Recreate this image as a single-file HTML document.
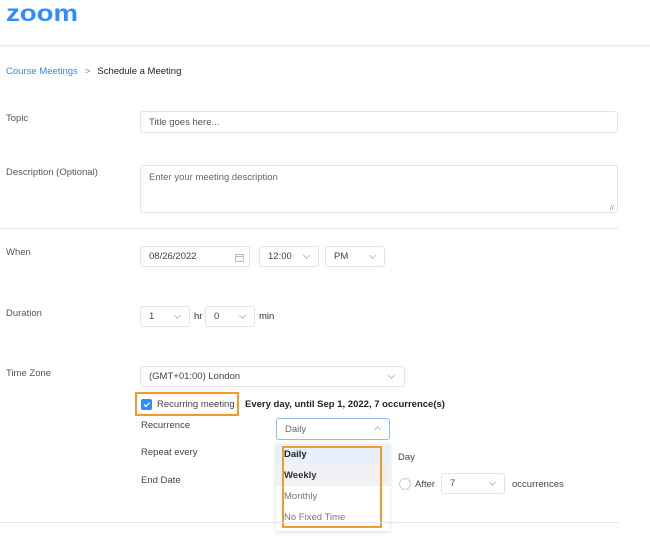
<!DOCTYPE html>
<html><head><style>
*{box-sizing:border-box;margin:0;padding:0}
body{width:650px;height:537px;background:#fff;font-family:"Liberation Sans",Arial,sans-serif;font-size:9.5px;color:#333;position:relative;overflow:hidden}
.a{position:absolute}
.lbl{position:absolute;left:6px;color:#555;font-size:9.5px}
.box{position:absolute;border:1px solid #e3e3e8;border-radius:3px;background:#fff;color:#444;padding-left:8px;display:flex;align-items:center;font-size:9.5px}
.chev{position:absolute;width:5px;height:5px;border-right:1px solid #bbb;border-bottom:1px solid #bbb;transform:rotate(45deg)}
.line{position:absolute;left:0;width:618px;height:1px;background:#e6e6ea}
.dd{position:absolute;left:276px;width:114px;padding-left:8px;display:flex;align-items:center;font-size:9.5px}
</style></head><body>
<div class="a" style="left:0;top:0;width:650px;height:46px;border-bottom:1px solid #e6e6e6;box-shadow:0 1px 2px rgba(0,0,0,.05)"></div>
<svg class="a" style="left:5px;top:0" width="80" height="26"><text x="1" y="21" font-family="Liberation Sans" font-weight="bold" font-size="23" fill="#2d8cff" textLength="72" lengthAdjust="spacingAndGlyphs">zoom</text></svg>
<div class="a" style="left:6px;top:66px;font-size:9.5px"><span style="color:#2d8cff">Course Meetings</span><span style="color:#888;margin:0 7px 0 7px">&gt;</span><span style="color:#222">Schedule a Meeting</span></div>

<div class="lbl" style="top:113px">Topic</div>
<div class="box" style="left:140px;top:111px;width:478px;height:22px;color:#555">Title goes here...</div>

<div class="lbl" style="top:167px">Description (Optional)</div>
<div class="box" style="left:140px;top:165px;width:478px;height:48px;align-items:flex-start;padding-top:6px;color:#666">Enter your meeting description</div>
<div class="a" style="left:610px;top:205px;font-size:7px;color:#888">//</div>
<div class="line" style="top:228px"></div>

<div class="lbl" style="top:247px">When</div>
<div class="box" style="left:140px;top:246px;width:110px;height:21px">08/26/2022<svg class="a" style="left:94px;top:6px" width="9" height="9"><rect x="0.5" y="1.5" width="8" height="7" fill="none" stroke="#bbb"/><line x1="0.5" y1="3.5" x2="8.5" y2="3.5" stroke="#bbb"/></svg></div>
<div class="box" style="left:259px;top:246px;width:60px;height:21px">12:00<span class="chev" style="left:44px;top:6px"></span></div>
<div class="box" style="left:325px;top:246px;width:60px;height:21px">PM<span class="chev" style="left:44px;top:6px"></span></div>

<div class="lbl" style="top:308px">Duration</div>
<div class="box" style="left:140px;top:306px;width:50px;height:21px">1<span class="chev" style="left:34px;top:6px"></span></div>
<div class="a" style="left:194px;top:311px">hr</div>
<div class="box" style="left:205px;top:306px;width:50px;height:21px">0<span class="chev" style="left:34px;top:6px"></span></div>
<div class="a" style="left:259px;top:311px">min</div>

<div class="lbl" style="top:368px">Time Zone</div>
<div class="box" style="left:140px;top:366px;width:265px;height:21px">(GMT+01:00) London<span class="chev" style="left:248px;top:6px"></span></div>

<div class="a" style="left:135px;top:392px;width:104px;height:24px;border:2px solid #f39a2b"></div>
<div class="a" style="left:141px;top:399px;width:11px;height:11px;background:#2d8cff;border-radius:2px"><svg width="11" height="11"><path d="M3 5.5l2 2 3.5-4" stroke="#fff" stroke-width="1.3" fill="none"/></svg></div>
<div class="a" style="left:157px;top:399px;color:#444">Recurring meeting</div>
<div class="a" style="left:245px;top:399px;font-weight:bold;color:#222">Every day, until Sep 1, 2022, 7 occurrence(s)</div>

<div class="lbl" style="top:420px;left:141px;color:#444">Recurrence</div>
<div class="box" style="left:276px;top:418px;width:114px;height:22px;border-color:#8ab9f0;color:#666">Daily<span class="chev" style="left:98px;top:8px;transform:rotate(-135deg)"></span></div>

<div class="lbl" style="top:447px;left:141px;color:#444">Repeat every</div>
<div class="a" style="left:398px;top:452px;color:#444">Day</div>
<div class="lbl" style="top:475px;left:141px;color:#444">End Date</div>
<div class="a" style="left:399px;top:478px;width:12px;height:12px;border:1px solid #ccc;border-radius:50%"></div>
<div class="a" style="left:415px;top:479px;color:#444">After</div>
<div class="box" style="left:441px;top:473px;width:64px;height:21px">7<span class="chev" style="left:48px;top:6px"></span></div>
<div class="a" style="left:512px;top:479px;color:#444">occurrences</div>

<div class="a" style="left:276px;top:443px;width:114px;height:88px;background:#fff;box-shadow:0 1px 4px rgba(0,0,0,.15);border-radius:2px"></div>
<div class="dd" style="top:444px;height:20px;background:#e6f1fc;font-weight:bold;color:#222">Daily</div>
<div class="dd" style="top:464px;height:22px;background:#f1f1f5;font-weight:bold;color:#333">Weekly</div>
<div class="dd" style="top:486px;height:21px;color:#777">Monthly</div>
<div class="dd" style="top:507px;height:21px;color:#777">No Fixed Time</div>
<div class="a" style="left:282px;top:446px;width:100px;height:82px;border:2px solid #f39a2b"></div>

<div class="line" style="top:522px"></div>
</body></html>
